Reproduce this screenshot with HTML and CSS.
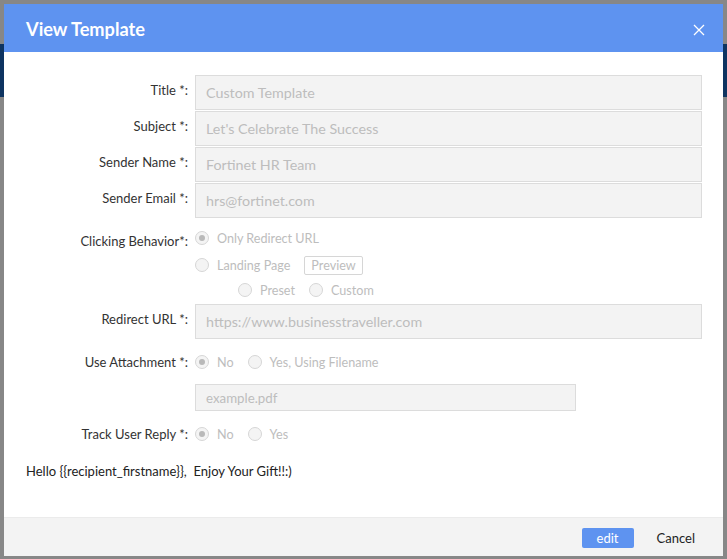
FILE: index.html
```html
<!DOCTYPE html>
<html>
<head>
<meta charset="utf-8">
<title>View Template</title>
<link rel="stylesheet" href="styles.css">
</head>
<body>
<div class="backdrop">
  <div class="page-band"></div>
</div>
<div class="modal">
  <div class="modal-header">
    <h1 class="modal-title">View Template</h1>
    <svg class="close-icon" width="12" height="12" viewBox="0 0 12 12"><path d="M1 1L11 11M11 1L1 11" stroke="#fff" stroke-width="1.3" fill="none"/></svg>
  </div>
  <div class="modal-body">
    <div class="form-grid">
      <label class="f-label up">Title *:</label>
      <div class="f-input">Custom Template</div>
      <label class="f-label up">Subject *:</label>
      <div class="f-input">Let's Celebrate The Success</div>
      <label class="f-label up">Sender Name *:</label>
      <div class="f-input">Fortinet HR Team</div>
      <label class="f-label up">Sender Email *:</label>
      <div class="f-input">hrs@fortinet.com</div>

      <label class="f-label label-top">Clicking Behavior*:</label>
      <div class="radio-stack">
        <div class="radio-row first"><span class="radio checked"></span><span class="r-text">Only Redirect URL</span></div>
        <div class="radio-row"><span class="radio"></span><span class="r-text">Landing Page</span><span class="preview-btn">Preview</span></div>
        <div class="radio-row sub"><span class="radio"></span><span class="r-text">Preset</span><span class="radio"></span><span class="r-text">Custom</span></div>
      </div>

      <label class="f-label up">Redirect URL *:</label>
      <div class="f-input">https://www.businesstraveller.com</div>

      <label class="f-label row-attach">Use Attachment *:</label>
      <div class="radio-row row-attach"><span class="radio checked"></span><span class="r-text">No</span><span class="radio"></span><span class="r-text">Yes, Using Filename</span></div>

      <div></div>
      <div class="f-input small">example.pdf</div>

      <label class="f-label row-track">Track User Reply *:</label>
      <div class="radio-row row-track"><span class="radio checked"></span><span class="r-text">No</span><span class="radio"></span><span class="r-text">Yes</span></div>
    </div>
    <p class="message">Hello {{recipient_firstname}},&nbsp; Enjoy Your Gift!!:)</p>
  </div>
  <div class="modal-footer">
    <button class="btn-edit">edit</button>
    <button class="btn-cancel">Cancel</button>
  </div>
</div>
</body>
</html>
```
FILE: styles.css
```css
html, body {
  margin: 0;
  padding: 0;
}
body {
  width: 727px;
  height: 559px;
  overflow: hidden;
  background: #878787;
  font-family: Lato, "Open Sans", sans-serif;
  position: relative;
}
.backdrop {
  padding-top: 44px;
}
.page-band {
  height: 53px;
  background: #0e3461;
}
.modal {
  position: absolute;
  left: 4px;
  top: 4px;
  width: 719px;
  height: 552px;
  background: #fff;
  display: flex;
  flex-direction: column;
}
.modal-header {
  height: 48px;
  background: #5e93f0;
  display: flex;
  align-items: center;
  justify-content: space-between;
  padding: 0 18px 0 22px;
  flex: none;
}
.modal-title {
  margin: 0;
  color: #fff;
  font-size: 18.2px;
  font-weight: 700;
  margin-top: 2px;
}
.close-icon {
  margin-top: 4px;
}
.modal-body {
  flex: 1;
  padding: 23px 21px 0 22px;
}
.form-grid {
  display: grid;
  grid-template-columns: 162px 1fr;
  column-gap: 7px;
  row-gap: 1px;
}
.f-label {
  font-size: 13px;
  color: #333;
  text-align: right;
  display: flex;
  align-items: center;
  justify-content: flex-end;
}
.f-label.up {
  padding-bottom: 5px;
}
.f-input {
  box-sizing: border-box;
  height: 35px;
  border: 1px solid #dcdcdc;
  background: #f3f3f3;
  color: #bdbdbd;
  font-size: 14.3px;
  display: flex;
  align-items: center;
  padding-left: 10px;
}
.f-input.small {
  width: 381px;
  height: 27px;
  margin-top: 8px;
  margin-bottom: 9px;
  font-size: 13.3px;
}
.label-top {
  align-items: flex-start;
  padding-top: 14px;
  margin-bottom: 1px;
}
.radio-stack {
  display: flex;
  flex-direction: column;
  margin-bottom: 1px;
}
.radio-row {
  display: flex;
  align-items: center;
  height: 26px;
}
.radio-row.first {
  margin-top: 6px;
  margin-bottom: 1px;
}
.radio-row.sub {
  height: 24px;
  padding-left: 43px;
}
.radio {
  width: 12px;
  height: 12px;
  border: 1px solid #d6d6d6;
  border-radius: 50%;
  background: #f4f4f4;
  flex: none;
  position: relative;
  margin-right: 8px;
}
.radio.checked::after {
  content: "";
  position: absolute;
  left: 3px;
  top: 3px;
  width: 6px;
  height: 6px;
  border-radius: 50%;
  background: #b9b9b9;
}
.r-text {
  font-size: 12.6px;
  color: #bdbdbd;
  margin-right: 14px;
}
.preview-btn {
  font-size: 12.6px;
  color: #bdbdbd;
  border: 1px solid #d6d6d6;
  border-radius: 2px;
  padding: 1px 6px;
}
.row-attach {
  margin-top: 9px;
}
.row-track {
  height: 26px;
}
.message {
  margin: 16px 0 0 0;
  font-size: 13px;
  color: #222;
}
.modal-footer {
  flex: none;
  height: 38px;
  border-top: 1px solid #ebebeb;
  background: #f3f3f3;
  display: flex;
  align-items: center;
  justify-content: flex-end;
  padding-right: 28px;
}
.btn-edit {
  font-family: Lato, "Open Sans", sans-serif;
  background: #5e93f0;
  color: #fff;
  border: none;
  border-radius: 2px;
  font-size: 13px;
  width: 52px;
  height: 20px;
  padding: 0;
  margin-top: 2px;
}
.btn-cancel {
  font-family: Lato, "Open Sans", sans-serif;
  background: none;
  border: none;
  color: #222;
  font-size: 13px;
  padding: 0;
  margin-left: 23px;
  margin-top: 2px;
}
```
